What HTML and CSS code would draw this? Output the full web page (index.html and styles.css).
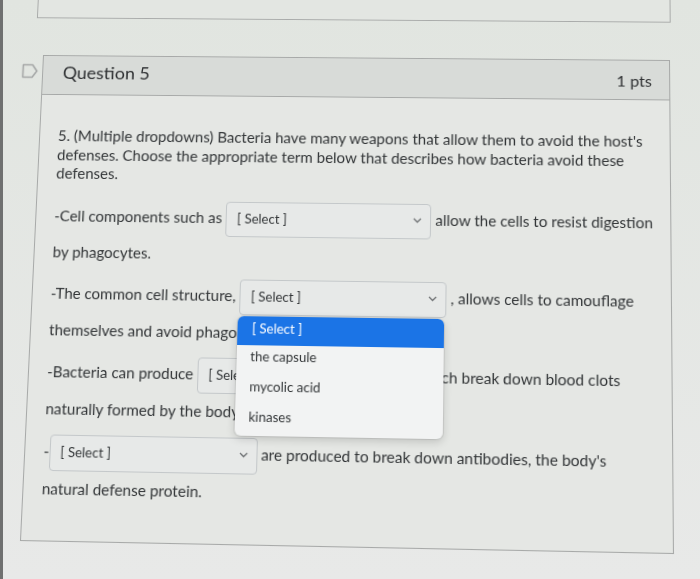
FILE: index.html
```html
<!DOCTYPE html>
<html lang="en">
<head>
<meta charset="utf-8">
<title>Question 5</title>
<link rel="stylesheet" href="styles.css">
</head>
<body>
<div class="screen">
  <div class="prev-card"></div>
  <div class="question">
    <svg class="flag" width="17" height="16" viewBox="0 0 17 16" aria-hidden="true">
      <path d="M1.5 1.5 H11 L15.5 8 L11 14.5 H1.5 Z" fill="none" stroke="#a2a4a4" stroke-width="1.5" stroke-linejoin="round"/>
    </svg>
    <div class="card">
      <div class="card-head">
        <span class="title">Question 5</span>
        <span class="pts">1 pts</span>
      </div>
      <div class="card-body">
        <p class="intro">5. (Multiple dropdowns) Bacteria have many weapons that allow them to avoid the host's<br>defenses. Choose the appropriate term below that describes how bacteria avoid these<br>defenses.</p>

        <div class="blank">-Cell components such as <span class="select"><span class="sel-label">[ Select ]</span><svg class="chev" width="9" height="6" viewBox="0 0 9 6"><path d="M1 1 L4.5 4.5 L8 1" fill="none" stroke="#707375" stroke-width="1.3"/></svg></span> allow the cells to resist digestion<br>by phagocytes.</div>

        <div class="blank">-The common cell structure, <span class="select"><span class="sel-label">[ Select ]</span><svg class="chev" width="9" height="6" viewBox="0 0 9 6"><path d="M1 1 L4.5 4.5 L8 1" fill="none" stroke="#707375" stroke-width="1.3"/></svg><ul class="menu"><li class="active">[ Select ]</li><li>the capsule</li><li>mycolic acid</li><li>kinases</li></ul></span> , allows cells to camouflage<br>themselves and avoid phagocytosis.</div>

        <div class="blank">-Bacteria can produce <span class="select select-wide"><span class="sel-label">[ Select ]</span><svg class="chev" width="9" height="6" viewBox="0 0 9 6"><path d="M1 1 L4.5 4.5 L8 1" fill="none" stroke="#707375" stroke-width="1.3"/></svg></span> which break down blood clots<br>naturally formed by the body.</div>

        <div class="blank">-<span class="select"><span class="sel-label">[ Select ]</span><svg class="chev" width="9" height="6" viewBox="0 0 9 6"><path d="M1 1 L4.5 4.5 L8 1" fill="none" stroke="#707375" stroke-width="1.3"/></svg></span> are produced to break down antibodies, the body's<br>natural defense protein.</div>
      </div>
    </div>
  </div>
</div>
</body>
</html>
```

FILE: styles.css
```css
html, body {
  margin: 0;
  height: 100%;
  overflow: hidden;
}

body {
  background:
    linear-gradient(to right, #6f7070 0, #6f7070 3px, transparent 3px),
    linear-gradient(#e1e5e0, #e8e9e8);
  font-family: Lato, "Liberation Sans", sans-serif;
  color: #333638;
}

/* the photo is taken at a slight angle: one homography maps the flat page onto it */
.screen {
  display: flow-root;
  width: 700px;
  height: 579px;
  transform-origin: 0 0;
  transform: matrix3d(0.982255, 0.006516, 0, -0.00002411,
                      -0.048423, 0.940561, 0, -0.00008372,
                      0, 0, 1, 0,
                      3.4263, 2.9889, 0, 1.0056413);
}

.prev-card {
  margin: -10px 0 0 35px;
  width: 637px;
  height: 26px;
  box-sizing: border-box;
  border: 1px solid #a9abaa;
  border-top: 0;
  background: #e3e6e2;
}

.question {
  display: flex;
  align-items: flex-start;
  gap: 4px;
  margin: 39px 0 0 22px;
}

.flag {
  flex: none;
  margin-top: 9px;
}

.card {
  width: 628px;
  box-sizing: border-box;
  border: 1px solid #a7a9a8;
  background: #e5e7e4;
}

.card-head {
  height: 41px;
  box-sizing: border-box;
  display: flex;
  align-items: center;
  justify-content: space-between;
  padding: 0 17px 0 20px;
  background: #d8dbd8;
  border-bottom: 1px solid #a7a9a8;
  color: #2e3032;
}

.title {
  font-size: 18px;
  margin-bottom: 6px;
}

.pts {
  font-size: 16px;
}

.card-body {
  padding: 33px 10px 34px 18px;
}

.intro {
  margin: 0 0 16px;
  font-size: 15px;
  line-height: 19.5px;
  white-space: nowrap;
}

.blank {
  margin: 0 0 8px;
  font-size: 15px;
  line-height: 34px;
  white-space: nowrap;
}

.blank:last-child {
  margin-bottom: 0;
}

.select {
  position: relative;
  display: inline-flex;
  justify-content: space-between;
  align-items: flex-start;
  vertical-align: middle;
  box-sizing: border-box;
  width: 203px;
  height: 36px;
  padding: 8px 8px 0 10px;
  border: 1px solid #c4c8ca;
  border-radius: 4px;
  background: #e7e9e8;
  font-size: 13px;
  line-height: 16px;
  color: #333638;
}

.select-wide {
  width: 211px;
}

.chev {
  margin-top: 5px;
}

.menu {
  position: absolute;
  top: 100%;
  left: -2px;
  z-index: 5;
  width: 202px;
  margin: 2px 0 0;
  padding: 0;
  list-style: none;
  background: #f2f3f3;
  border-radius: 6px;
  box-shadow: 0 0 0 1px rgba(0, 0, 0, 0.07), 0 3px 8px rgba(0, 0, 0, 0.16);
  overflow: hidden;
  font-size: 13px;
}

.menu li {
  height: 30px;
  line-height: 22px;
  padding-left: 13px;
  color: #333638;
}

.menu li.active {
  height: 29px;
  line-height: 24px;
  padding-left: 14px;
  background: #1b74e6;
  color: #ffffff;
}
```
